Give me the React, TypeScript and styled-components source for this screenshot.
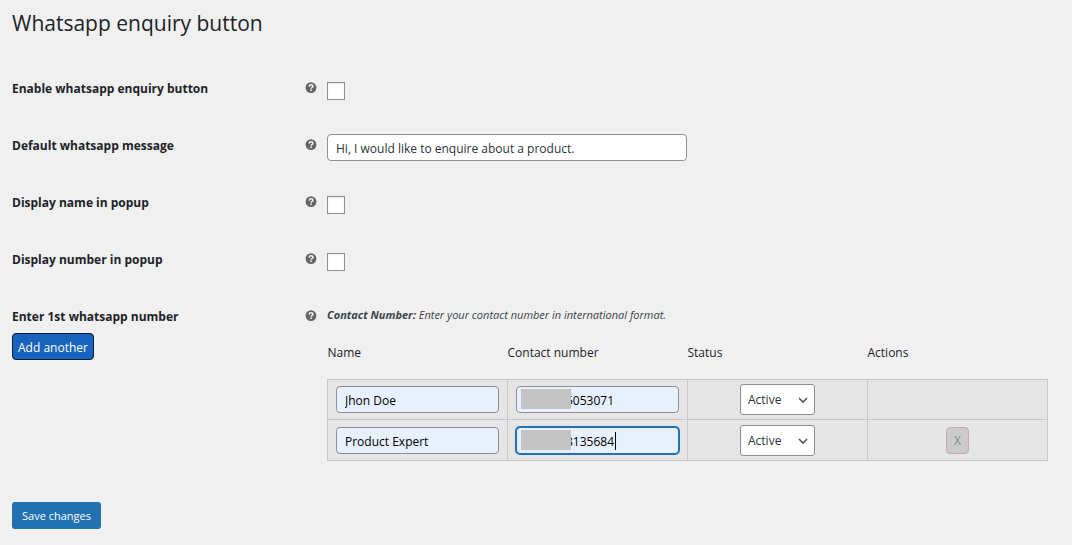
import React from "react";
import styled, { createGlobalStyle, css } from "styled-components";

const GlobalStyle = createGlobalStyle`
  *, *::before, *::after { box-sizing: border-box; }
  body {
    margin: 0;
    background: #f0f0f1;
    color: #1d2327;
    font: 400 12px/17px "Open Sans", "Noto Sans", sans-serif;
  }
  input, select, button { font-family: inherit; margin: 0; }
`;

const Page = styled.form`
  padding: 8px 24px 16px 12px;
`;

const Title = styled.h1`
  margin: 0 0 24px;
  font-size: 21px;
  font-weight: 400;
  line-height: 30px;
`;

const Row = styled.div`
  display: grid;
  grid-template-columns: 291px 24px minmax(0, 1fr);
  align-items: start;
  min-height: 57px;
`;

const LabelCell = styled.div`
  padding-top: 18px;
`;

const Label = styled.label`
  display: block;
  font-weight: 700;
`;

const HelpCell = styled.div`
  padding: 20px 0 0 2px;
  svg { display: block; }
`;

const Field = styled.div<{ $top: number }>`
  padding-top: ${(p) => p.$top}px;
`;

const CheckBox = styled.input`
  appearance: none;
  display: block;
  width: 18px;
  height: 18px;
  border: 1px solid #8c8f94;
  background: #fff;
  box-shadow: inset 0 1px 2px rgba(0, 0, 0, 0.1);
`;

const TextInput = styled.input<{ $filled?: boolean; $masked?: boolean; $active?: boolean }>`
  display: block;
  width: 100%;
  height: 27px;
  padding: 2px 8px 0;
  border: 1px solid #8c8f94;
  border-radius: 4px;
  background: #fff;
  color: #2c3338;
  font-size: 12px;
  outline: none;
  ${(p) => p.$filled && css`background: #e8f0fe; color: #000;`}
  ${(p) => p.$masked && css`padding-left: 49px;`}
  ${(p) => p.$active && css`border-color: #2271b1; box-shadow: 0 0 0 1px #2271b1;`}
`;

const MessageInput = styled(TextInput)`
  max-width: 360px;
`;

const Description = styled.p`
  margin: 0;
  color: #3c434a;
  font-size: 11px;
  font-style: italic;
  line-height: 16px;
`;

const AddButton = styled.button`
  display: block;
  height: 27px;
  margin-top: 8px;
  padding: 1px 5px 0;
  border: 1px solid #0a1d33;
  border-radius: 4px;
  background: #1863bc;
  color: #fff;
  font-size: 12px;
`;

const ContactTable = styled.table`
  width: 100%;
  margin-top: 19px;
  border-collapse: collapse;
  table-layout: fixed;
  th {
    height: 37px;
    padding: 2px 0 0;
    font-weight: 500;
    text-align: left;
    vertical-align: top;
  }
  td {
    height: 41px;
    padding: 7px 8px 6px;
    border: 1px solid #c9c9c9;
    background: #e5e5e5;
  }
  tbody tr:first-child td {
    height: 40px;
    padding: 6px 8px;
  }
`;

const NumberBox = styled.div`
  position: relative;
`;

const Mask = styled.span`
  position: absolute;
  top: 3px;
  left: 5px;
  width: 50px;
  height: 20px;
  background: #c3c3c3;
`;

const Caret = styled.span`
  position: absolute;
  top: 5px;
  left: 99px;
  width: 1px;
  height: 18px;
  background: #000;
`;

const SelectBox = styled.div`
  position: relative;
  width: 75px;
  margin: -2px auto;
  svg {
    position: absolute;
    top: 11px;
    right: 7px;
    pointer-events: none;
  }
`;

const StatusSelect = styled.select`
  appearance: none;
  display: block;
  width: 100%;
  height: 31px;
  padding: 0 24px 0 7px;
  border: 1px solid #8c8f94;
  border-radius: 3px;
  background: #fff;
  color: #2c3338;
  font-size: 12px;
`;

const RemoveButton = styled.button`
  display: block;
  width: 23px;
  height: 27px;
  margin: 0 auto;
  padding: 0;
  border: 1px solid #c9a9a9;
  border-radius: 4px;
  background: #cbcbcb;
  color: #8b8488;
  font-size: 12px;
`;

const SaveButton = styled.button`
  display: block;
  height: 27px;
  margin-top: 41px;
  padding: 0 10px;
  border: 0;
  border-radius: 3px;
  background: #2271b1;
  color: #fff;
  font-size: 11px;
  font-weight: 500;
`;

const HelpIcon = () => (
  <svg width="12" height="12" viewBox="0 0 12 12" aria-hidden="true">
    <circle cx="6" cy="5.6" r="5.4" fill="#646464" />
    <path d="M4.1 4.6C4.2 3.2 5 2.8 6 2.8s1.9.6 1.9 1.6C7.9 5.5 6.1 5.4 6.1 6.8" fill="none" stroke="#f0f0f1" strokeWidth="1.5" />
    <rect x="5.3" y="7.5" width="1.6" height="1.5" fill="#f0f0f1" />
  </svg>
);

const Chevron = () => (
  <svg width="10" height="10" viewBox="0 0 10 10" aria-hidden="true">
    <path d="M1 3l4 4 4-4" fill="none" stroke="#555" strokeWidth="1.6" />
  </svg>
);

type SettingProps = {
  id: string;
  label: string;
  top: number;
  action?: React.ReactNode;
  children: React.ReactNode;
};

const Setting = ({ id, label, top, action, children }: SettingProps) => (
  <Row>
    <LabelCell>
      <Label htmlFor={id}>{label}</Label>
      {action}
    </LabelCell>
    <HelpCell><HelpIcon /></HelpCell>
    <Field $top={top}>{children}</Field>
  </Row>
);

const contacts = [
  { name: "Jhon Doe", number: "5053071", active: false },
  { name: "Product Expert", number: "8135684", active: true },
];

export default function App() {
  return (
    <>
      <GlobalStyle />
      <Page onSubmit={(e) => e.preventDefault()}>
        <Title>Whatsapp enquiry button</Title>
        <Setting id="enable" label="Enable whatsapp enquiry button" top={20}>
          <CheckBox id="enable" type="checkbox" />
        </Setting>
        <Setting id="message" label="Default whatsapp message" top={15}>
          <MessageInput id="message" type="text" defaultValue="Hi, I would like to enquire about a product." />
        </Setting>
        <Setting id="show-name" label="Display name in popup" top={20}>
          <CheckBox id="show-name" type="checkbox" />
        </Setting>
        <Setting id="show-number" label="Display number in popup" top={20}>
          <CheckBox id="show-number" type="checkbox" />
        </Setting>
        <Setting
          id="name-0"
          label="Enter 1st whatsapp number"
          top={17}
          action={<AddButton type="button">Add another</AddButton>}
        >
          <Description>
            <strong>Contact Number:</strong> Enter your contact number in international format.
          </Description>
          <ContactTable>
            <thead>
              <tr>
                <th scope="col">Name</th>
                <th scope="col">Contact number</th>
                <th scope="col">Status</th>
                <th scope="col">Actions</th>
              </tr>
            </thead>
            <tbody>
              {contacts.map((c, i) => (
                <tr key={c.name}>
                  <td>
                    <TextInput id={`name-${i}`} aria-label="Name" type="text" $filled defaultValue={c.name} />
                  </td>
                  <td>
                    <NumberBox>
                      <TextInput aria-label="Contact number" type="text" $filled $masked $active={c.active} defaultValue={c.number} />
                      <Mask />
                      {c.active && <Caret />}
                    </NumberBox>
                  </td>
                  <td>
                    <SelectBox>
                      <StatusSelect aria-label="Status" defaultValue="Active">
                        <option>Active</option>
                        <option>Inactive</option>
                      </StatusSelect>
                      <Chevron />
                    </SelectBox>
                  </td>
                  <td>{i > 0 && <RemoveButton type="button">X</RemoveButton>}</td>
                </tr>
              ))}
            </tbody>
          </ContactTable>
        </Setting>
        <SaveButton type="submit">Save changes</SaveButton>
      </Page>
    </>
  );
}
